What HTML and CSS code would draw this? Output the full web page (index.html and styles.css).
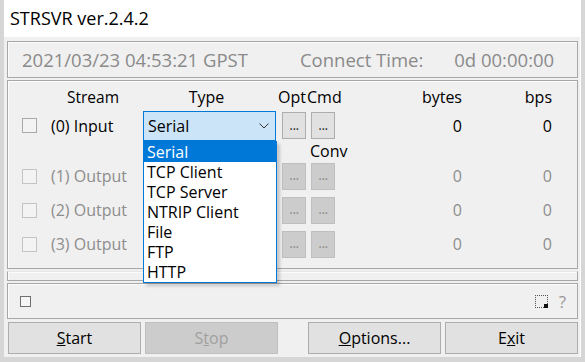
FILE: index.html
```html
<!doctype html>
<html>
  <head>
    <title>STRSVR ver.2.4.2</title>
    <meta name="viewport" content="width=device-width">
    <link rel="stylesheet" href="styles.css">
  </head>
  <body>
    <div class="window">
      <div class="titlebar">STRSVR ver.2.4.2</div>
      <div class="client">
        <div class="panel status">
          <span class="time">2021/03/23 04:53:21 GPST</span>
          <span class="conn-label">Connect Time:</span>
          <span class="conn">0d 00:00:00</span>
        </div>

        <div class="panel streams">
          <div class="row head">
            <span class="c-chk"></span>
            <span class="c-name">Stream</span>
            <span class="c-type">Type</span>
            <span class="c-opt">Opt</span>
            <span class="c-cmd">Cmd</span>
            <span class="c-bytes">bytes</span>
            <span class="c-bps">bps</span>
          </div>
          <div class="row first">
            <span class="c-chk"><span class="chk"></span></span>
            <span class="c-name">(0) Input</span>
            <span class="c-type">
              <span class="combo focus">Serial
                <svg class="chev" width="10" height="6" viewBox="0 0 10 6"><polyline points="0.5,0.5 5,5 9.5,0.5" fill="none" stroke="#333" stroke-width="1"/></svg>
              </span>
            </span>
            <span class="c-opt"><button class="dots">...</button></span>
            <span class="c-cmd"><button class="dots">...</button></span>
            <span class="c-bytes">0</span>
            <span class="c-bps">0</span>
          </div>
          <div class="row conv">
            <span class="c-cmd">Conv</span>
          </div>
          <div class="row off">
            <span class="c-chk"><span class="chk"></span></span>
            <span class="c-name">(1) Output</span>
            <span class="c-type"><span class="combo"></span></span>
            <span class="c-opt"><button class="dots" disabled>...</button></span>
            <span class="c-cmd"><button class="dots" disabled>...</button></span>
            <span class="c-bytes">0</span>
            <span class="c-bps">0</span>
          </div>
          <div class="row off">
            <span class="c-chk"><span class="chk"></span></span>
            <span class="c-name">(2) Output</span>
            <span class="c-type"><span class="combo"></span></span>
            <span class="c-opt"><button class="dots" disabled>...</button></span>
            <span class="c-cmd"><button class="dots" disabled>...</button></span>
            <span class="c-bytes">0</span>
            <span class="c-bps">0</span>
          </div>
          <div class="row off">
            <span class="c-chk"><span class="chk"></span></span>
            <span class="c-name">(3) Output</span>
            <span class="c-type"><span class="combo"></span></span>
            <span class="c-opt"><button class="dots" disabled>...</button></span>
            <span class="c-cmd"><button class="dots" disabled>...</button></span>
            <span class="c-bytes">0</span>
            <span class="c-bps">0</span>
          </div>

          <ul class="droplist">
            <li class="sel">Serial</li>
            <li>TCP Client</li>
            <li>TCP Server</li>
            <li>NTRIP Client</li>
            <li>File</li>
            <li>FTP</li>
            <li>HTTP</li>
          </ul>
        </div>

        <div class="panel thin"></div>

        <div class="panel statusbar">
          <span class="tray-box"></span>
          <span class="spacer"></span>
          <span class="grip"><span class="grip-dot"></span></span>
          <span class="help">?</span>
        </div>

        <div class="buttons">
          <button class="btn"><u>S</u>tart</button>
          <button class="btn" disabled>S<u>t</u>op</button>
          <button class="btn push"><u>O</u>ptions...</button>
          <button class="btn">E<u>x</u>it</button>
        </div>
      </div>
    </div>
  </body>
</html>
```

FILE: styles.css
```css
body {
  margin: 0;
  width: 585px;
  height: 362px;
  overflow: hidden;
  background: #d6d6d6;
  font-family: "Segoe UI", "Open Sans", sans-serif;
  font-size: 16px;
  color: #000;
}
.window {
  margin-left: 4px;
  width: 576px;
  height: 357px;
  background: #f0f0f0;
  box-shadow: 1px 0 0 #ffffff;
}
.titlebar {
  height: 37px;
  line-height: 37px;
  background: #fff;
  padding-left: 6px;
  font-size: 18px;
}
.client {
  padding: 4px 2px 0 3px;
}
.panel {
  border: 1px solid #a7a7a7;
  box-shadow: inset 1px 1px 0 #fcfcfc;
}
.status {
  height: 35px;
  display: flex;
  align-items: center;
  font-size: 18.5px;
  color: #8a8a8a;
}
.time {
  margin-left: 14px;
}
.conn-label {
  margin-left: 52px;
}
.conn {
  margin-left: 31px;
}

.streams {
  position: relative;
  margin-top: 2px;
  padding: 5px 0 7px 0;
}
.row {
  display: flex;
  align-items: center;
  height: 34px;
  line-height: 22px;
}
.row.head {
  height: 22px;
}
.row.first {
  height: 35px;
}
.row.conv {
  height: 16px;
  line-height: 16px;
  padding-left: 302px;
}
.c-chk {
  width: 29px;
  padding-left: 14px;
  display: flex;
}
.c-name {
  width: 92px;
}
.head .c-name {
  text-align: center;
  padding-right: 8px;
  width: 84px;
  font-size: 15.5px;
}
.c-type {
  width: 133px;
  display: flex;
}
.head .c-type {
  display: block;
  text-align: center;
  padding-right: 6px;
  width: 127px;
}
.c-opt {
  margin-left: 6px;
  width: 29px;
  display: flex;
}
.head .c-opt {
  display: block;
  margin-left: 2px;
  width: 33px;
}
.c-cmd {
  width: 25px;
  display: flex;
  white-space: nowrap;
}
.head .c-cmd {
  display: block;
  margin-left: -4px;
  width: 29px;
}
.c-bytes {
  width: 126px;
  text-align: right;
}
.c-bps {
  width: 90px;
  text-align: right;
}
.chk {
  width: 13px;
  height: 13px;
  border: 1px solid #a9a9a9;
  background: #f3f3f3;
}
.off {
  color: #8d8d8d;
}
.off .chk {
  border-color: #c4c4c4;
}
.combo {
  box-sizing: border-box;
  width: 133px;
  height: 30px;
  border: 1px solid #cccccc;
  background: #f0f0f0;
  display: flex;
  align-items: center;
  padding-left: 4px;
}
.combo.focus {
  border-color: #0078d7;
  background: #cce4f7;
}
.chev {
  margin-left: auto;
  margin-right: 6px;
}
.dots {
  box-sizing: border-box;
  width: 24px;
  height: 27px;
  padding: 0 0 3px 0;
  border: 1px solid #adadad;
  background: #e1e1e1;
  font-family: inherit;
  font-size: 14px;
  letter-spacing: -0.5px;
  color: #333;
}
.dots:disabled {
  background: #cccccc;
  border-color: #bfbfbf;
  color: #8c8c8c;
}

.droplist {
  position: absolute;
  left: 135px;
  top: 60px;
  width: 132px;
  margin: 0;
  padding: 0;
  list-style: none;
  background: #fff;
  border: 1px solid #0078d7;
  box-shadow: 3px 3px 3px rgba(0, 0, 0, 0.18);
  font-size: 16px;
}
.droplist li {
  height: 20px;
  line-height: 20px;
  padding-left: 3px;
}
.droplist .sel {
  background: #0078d7;
  color: #fff;
}

.thin {
  margin-top: 2px;
  height: 8px;
  border-top-color: #e6e6e6;
}
.statusbar {
  margin-top: 2px;
  height: 34px;
  display: flex;
  align-items: center;
}
.tray-box {
  margin-left: 12px;
  width: 9px;
  height: 9px;
  border: 1px solid #707070;
  background: #f6f6f6;
}
.spacer {
  flex: 1;
}
.grip {
  position: relative;
  width: 11px;
  height: 11px;
  border: 1px dotted #555;
}
.grip-dot {
  position: absolute;
  right: -1px;
  bottom: -1px;
  width: 4px;
  height: 4px;
  background: #111;
}
.help {
  margin: 0 11px 0 11px;
  color: #999;
  font-size: 17px;
}

.buttons {
  display: flex;
  gap: 4px;
  margin-top: 3px;
  padding-left: 1px;
}
.btn {
  width: 134px;
  height: 32px;
  border: 1px solid #adadad;
  background: #e1e1e1;
  font-family: inherit;
  font-size: 16px;
  color: #000;
  padding: 0;
}
.btn:disabled {
  background: #cccccc;
  border-color: #bfbfbf;
  color: #a0a0a0;
}
.btn.push {
  margin-left: 26px;
}
```
